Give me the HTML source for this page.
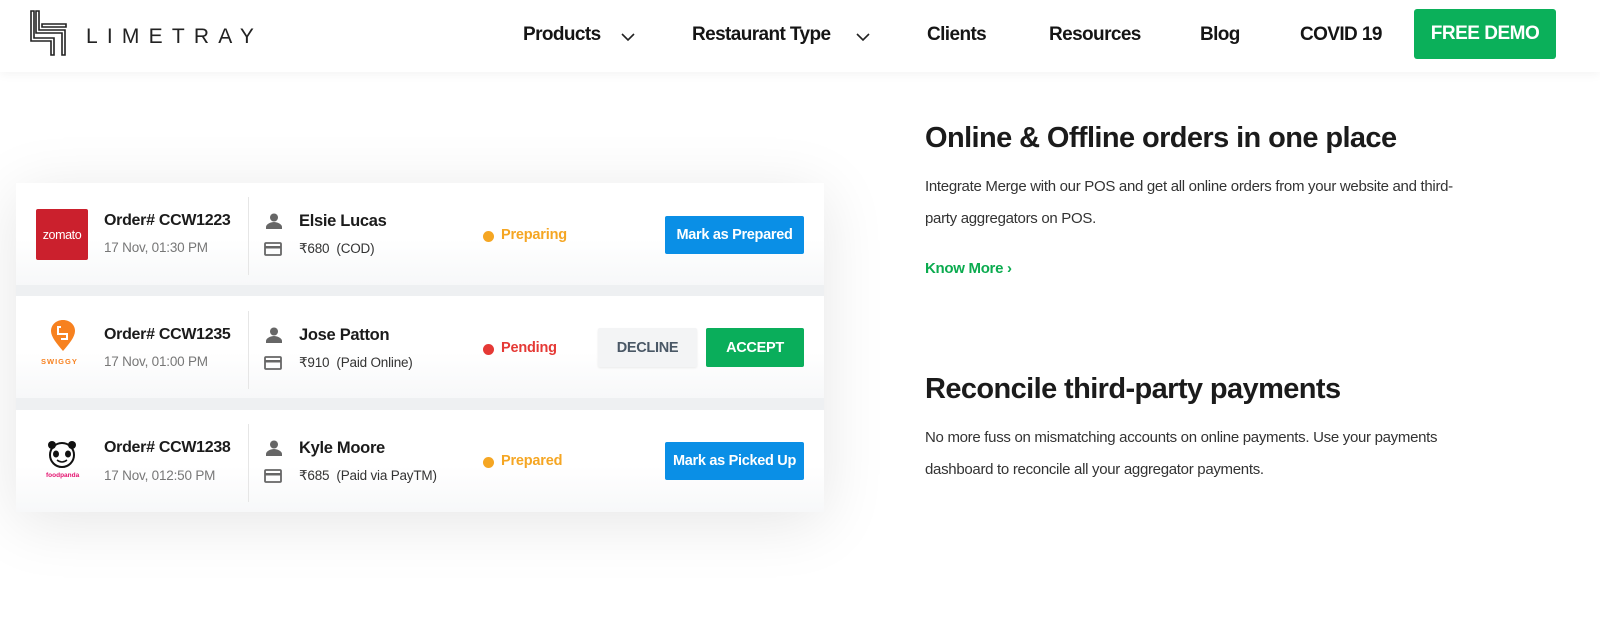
<!DOCTYPE html>
<html><head><meta charset="utf-8"><style>
*{margin:0;padding:0;box-sizing:border-box}
body{width:1600px;height:638px;background:#fff;font-family:"Liberation Sans",sans-serif;position:relative;overflow:hidden;color:#1b1b1b}
.a{position:absolute;white-space:nowrap}
.nav{font-size:19px;font-weight:bold;letter-spacing:-0.6px;top:24px;color:#151515}
.hdr{position:absolute;left:0;top:0;width:1600px;height:72px;background:#fff;box-shadow:0 2px 10px rgba(0,0,0,0.05)}
.wrap{position:absolute;left:16px;top:183px;width:808px;height:329px;background:#eef0f2;box-shadow:0 10px 60px rgba(0,0,0,0.10)}
.row{position:absolute;left:16px;width:808px;height:102px;background:linear-gradient(#fff 55%,#f7f8f9)}
.ord{font-size:16px;font-weight:bold;letter-spacing:-0.3px;color:#1b1b1b}
.dt{font-size:13.5px;color:#777;letter-spacing:-0.2px}
.nm{font-size:16.5px;font-weight:bold;letter-spacing:-0.3px}
.amt{font-size:13.5px;color:#333;letter-spacing:-0.2px}
.div{position:absolute;left:248px;width:1px;background:#e6e6e6}
.dot{position:absolute;width:11px;height:11px;border-radius:50%}
.st{font-size:14.5px;font-weight:bold;letter-spacing:-0.2px}
.btn{position:absolute;color:#fff;font-size:14.5px;font-weight:bold;display:flex;align-items:center;justify-content:center;border-radius:2px;letter-spacing:-0.3px}
h2{position:absolute;font-size:29px;font-weight:bold;letter-spacing:-0.6px;white-space:nowrap;color:#1b1b1b}
.p{font-size:15px;color:#333;line-height:32px;letter-spacing:-0.3px}
</style></head><body>
<div class="hdr"></div>
<svg class="a" style="left:28px;top:8px" width="42" height="50" viewBox="0 0 42 50" fill="none" stroke="#222" stroke-width="1.6">
<path d="M3 3v30h20v14h3V30H6V3z"/><path d="M8 3v22h26v22h3V22H11V3z"/><path d="M14 16h24v3H14z"/>
</svg>
<div class="a" style="left:86px;top:25px;font-size:21px;letter-spacing:9.2px;color:#222">LIMETRAY</div>
<div class="a nav" style="left:523px">Products</div>
<svg class="a" style="left:621px;top:33px" width="14" height="9"><path d="M1 1l6 6 6-6" stroke="#222" stroke-width="1.6" fill="none"/></svg>
<div class="a nav" style="left:692px">Restaurant Type</div>
<svg class="a" style="left:856px;top:33px" width="14" height="9"><path d="M1 1l6 6 6-6" stroke="#222" stroke-width="1.6" fill="none"/></svg>
<div class="a nav" style="left:927px">Clients</div>
<div class="a nav" style="left:1049px">Resources</div>
<div class="a nav" style="left:1200px">Blog</div>
<div class="a nav" style="left:1300px">COVID 19</div>
<div class="a" style="left:1414px;top:9px;width:142px;height:50px;background:#0bb05a;border-radius:3px;color:#fff;font-weight:bold;font-size:19px;letter-spacing:-0.5px;display:flex;align-items:center;justify-content:center">FREE DEMO</div>

<div class="wrap"></div>
<!-- row1 -->
<div class="row" style="top:183px"></div>
<div class="a" style="left:36px;top:209px;width:52px;height:51px;background:#cb202d;border-radius:2px;color:#fff;font-size:12.5px;display:flex;align-items:center;justify-content:center;letter-spacing:-0.4px">zomato</div>
<div class="a ord" style="left:104px;top:212px">Order# CCW1223</div>
<div class="a dt" style="left:104px;top:240px">17 Nov, 01:30 PM</div>
<div class="div" style="top:197px;height:78px"></div>
<svg class="a" style="left:266px;top:213px" width="16" height="16"><circle cx="8" cy="4.5" r="4" fill="#666"/><path d="M0 16v-2c0-3 5-5 8-5s8 2 8 5v2z" fill="#666"/></svg>
<svg class="a" style="left:264px;top:242px" width="18" height="14"><rect x="1" y="1" width="16" height="12" rx="1" fill="none" stroke="#666" stroke-width="1.8"/><rect x="1" y="4" width="16" height="2.5" fill="#666"/></svg>
<div class="a nm" style="left:299px;top:212px">Elsie Lucas</div>
<div class="a amt" style="left:299px;top:241px">₹680&nbsp; (COD)</div>
<div class="dot" style="left:483px;top:231px;background:#f5a623"></div>
<div class="a st" style="left:501px;top:227px;color:#f5a623">Preparing</div>
<div class="btn" style="left:665px;top:216px;width:139px;height:38px;background:#0a8fe6">Mark as Prepared</div>
<!-- row2 -->
<div class="row" style="top:296px"></div>
<svg class="a" style="left:40px;top:318px" width="46" height="54"><path d="M23 2c-7 0-12 5-12 11 0 6 6 13 12 20 6-7 12-14 12-20 0-6-5-11-12-11z" fill="#f7811f"/><path d="M21 9h-3v7h9v5h-6" stroke="#fff" stroke-width="2" fill="none"/><text x="1" y="46" font-size="7.5" font-weight="bold" fill="#f7811f" font-family="Liberation Sans" letter-spacing="1">SWIGGY</text></svg>
<div class="a ord" style="left:104px;top:326px">Order# CCW1235</div>
<div class="a dt" style="left:104px;top:354px">17 Nov, 01:00 PM</div>
<div class="div" style="top:311px;height:78px"></div>
<svg class="a" style="left:266px;top:327px" width="16" height="16"><circle cx="8" cy="4.5" r="4" fill="#666"/><path d="M0 16v-2c0-3 5-5 8-5s8 2 8 5v2z" fill="#666"/></svg>
<svg class="a" style="left:264px;top:356px" width="18" height="14"><rect x="1" y="1" width="16" height="12" rx="1" fill="none" stroke="#666" stroke-width="1.8"/><rect x="1" y="4" width="16" height="2.5" fill="#666"/></svg>
<div class="a nm" style="left:299px;top:326px">Jose Patton</div>
<div class="a amt" style="left:299px;top:355px">₹910&nbsp; (Paid Online)</div>
<div class="dot" style="left:483px;top:344px;background:#e53935"></div>
<div class="a st" style="left:501px;top:340px;color:#e53935">Pending</div>
<div class="btn" style="left:598px;top:328px;width:99px;height:39px;background:#f3f4f5;color:#4a5866;box-shadow:0 1px 2px rgba(0,0,0,.08)">DECLINE</div>
<div class="btn" style="left:706px;top:328px;width:98px;height:39px;background:#0aae5b">ACCEPT</div>
<!-- row3 -->
<div class="row" style="top:410px"></div>
<svg class="a" style="left:44px;top:440px" width="36" height="40"><circle cx="18" cy="15" r="12" fill="#fff" stroke="#111" stroke-width="2"/><circle cx="8" cy="5" r="4" fill="#111"/><circle cx="28" cy="5" r="4" fill="#111"/><ellipse cx="12" cy="14" rx="3" ry="3.5" fill="#111"/><ellipse cx="24" cy="14" rx="3" ry="3.5" fill="#111"/><path d="M13 20q5 4 10 0" stroke="#111" stroke-width="1.5" fill="none"/><text x="2" y="37" font-size="6.5" font-weight="bold" fill="#e4136f" font-family="Liberation Sans">foodpanda</text></svg>
<div class="a ord" style="left:104px;top:439px">Order# CCW1238</div>
<div class="a dt" style="left:104px;top:468px">17 Nov, 012:50 PM</div>
<div class="div" style="top:424px;height:78px"></div>
<svg class="a" style="left:266px;top:440px" width="16" height="16"><circle cx="8" cy="4.5" r="4" fill="#666"/><path d="M0 16v-2c0-3 5-5 8-5s8 2 8 5v2z" fill="#666"/></svg>
<svg class="a" style="left:264px;top:469px" width="18" height="14"><rect x="1" y="1" width="16" height="12" rx="1" fill="none" stroke="#666" stroke-width="1.8"/><rect x="1" y="4" width="16" height="2.5" fill="#666"/></svg>
<div class="a nm" style="left:299px;top:439px">Kyle Moore</div>
<div class="a amt" style="left:299px;top:468px">₹685&nbsp; (Paid via PayTM)</div>
<div class="dot" style="left:483px;top:457px;background:#f5a623"></div>
<div class="a st" style="left:501px;top:453px;color:#f5a623">Prepared</div>
<div class="btn" style="left:665px;top:442px;width:139px;height:38px;background:#0a8fe6">Mark as Picked Up</div>

<!-- right -->
<h2 style="left:925px;top:122px">Online &amp; Offline orders in one place</h2>
<div class="a p" style="left:925px;top:171px">Integrate Merge with our POS and get all online orders from your website and third-<br>party aggregators on POS.</div>
<div class="a" style="left:925px;top:260px;font-size:15px;font-weight:bold;color:#0bab4f;letter-spacing:-0.3px">Know More ›</div>
<h2 style="left:925px;top:373px">Reconcile third-party payments</h2>
<div class="a p" style="left:925px;top:422px">No more fuss on mismatching accounts on online payments. Use your payments<br>dashboard to reconcile all your aggregator payments.</div>
</body></html>
